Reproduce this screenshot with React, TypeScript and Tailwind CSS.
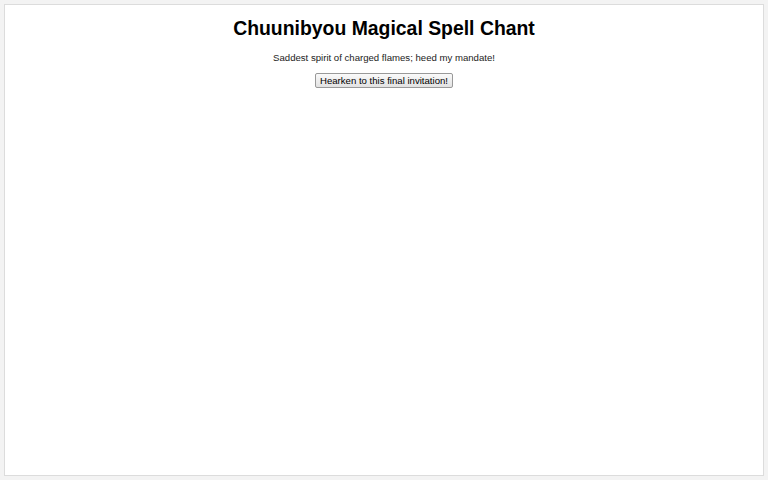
export default function App() {
  return (
    <div className="h-[480px] w-[768px] bg-[#f3f3f3] p-[4px] font-['Liberation_Sans',Arial,sans-serif]">
      <div className="flex h-[472px] flex-col items-center border border-[#dcdcdc] bg-white">
        <h1 className="mt-[10px] text-[19.4px] font-bold leading-[26px] text-black">
          Chuunibyou Magical Spell Chant
        </h1>
        <p className="mt-[11px] text-[9.6px] leading-[12px] text-[#222]">
          Saddest spirit of charged flames; heed my mandate!
        </p>
        <button className="mt-[9px] rounded-[2px] border border-[#999] bg-gradient-to-b from-[#fafafa] to-[#e2e2e2] px-[4px] text-[9.6px] leading-[13px] text-black">
          Hearken to this final invitation!
        </button>
      </div>
    </div>
  );
}
